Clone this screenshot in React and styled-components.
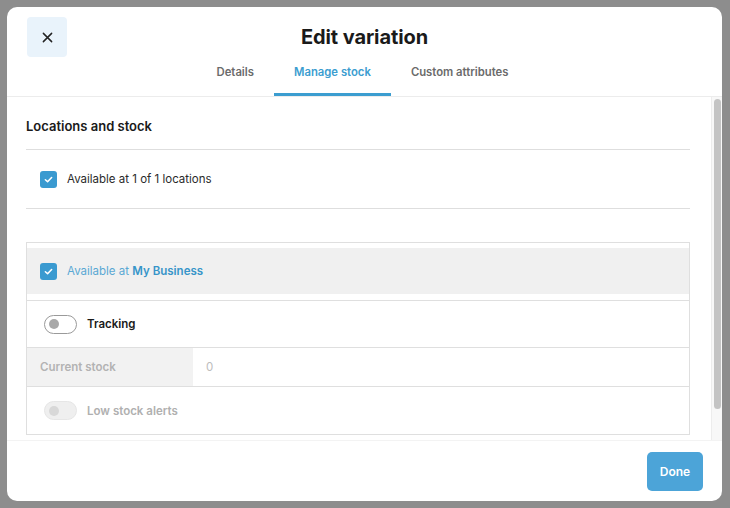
import React from "react";
import styled, { createGlobalStyle, css } from "styled-components";

const GlobalStyle = createGlobalStyle`
  html, body {
    margin: 0;
    padding: 0;
    background: #8d8d8d;
    font-family: Inter, "Open Sans", "Liberation Sans", sans-serif;
  }
  * {
    box-sizing: border-box;
  }
`;

const Backdrop = styled.div`
  width: 730px;
  height: 508px;
  padding: 7px 8px 7px 7px;
`;

const Modal = styled.div`
  width: 715px;
  height: 494px;
  background: #fff;
  border-radius: 10px;
  display: flex;
  flex-direction: column;
  overflow: hidden;
`;

// header

const Header = styled.div`
  padding: 10px 20px 0;
  border-bottom: 1px solid #ececec;
  flex-shrink: 0;
`;

const TopRow = styled.div`
  display: grid;
  grid-template-columns: 40px 1fr 40px;
  align-items: center;
  height: 40px;
`;

const CloseButton = styled.button`
  width: 40px;
  height: 40px;
  border: none;
  border-radius: 4px;
  background: #e9f3fb;
  display: flex;
  align-items: center;
  justify-content: center;
  padding: 0;
  cursor: pointer;
`;

const Title = styled.h1`
  margin: 0;
  text-align: center;
  font-size: 20px;
  font-weight: 700;
  color: #1a1a1a;
  letter-spacing: -0.1px;
`;

const Tabs = styled.div`
  display: flex;
  justify-content: center;
  height: 39px;
  margin-left: -4px;
`;

const Tab = styled.div`
  padding: 0 20px 6px;
  display: flex;
  align-items: center;
  font-size: 11.3px;
  font-weight: 600;
  color: #6b6b6b;
  border-bottom: 3px solid transparent;
  ${(props) =>
    props.active &&
    css`
      color: #3b9dd0;
      border-bottom-color: #3b9dd0;
    `}
`;

// body

const Body = styled.div`
  flex: 1;
  display: flex;
  min-height: 0;
`;

const Content = styled.div`
  flex: 1;
  overflow: hidden;
  padding: 0 21px 0 19px;
`;

const ScrollRail = styled.div`
  width: 11px;
  flex-shrink: 0;
  background: #f8f8f8;
  border-left: 1px solid #ededed;
  padding: 2px 1px 0 2px;
`;

const ScrollThumb = styled.div`
  width: 7px;
  border-radius: 4px;
  background: #c4c4c4;
`;

const SectionTitle = styled.div`
  padding: 21px 0 15px;
  font-size: 13px;
  font-weight: 600;
  color: #1a1a1a;
  border-bottom: 1px solid #dedede;
`;

const LocationsRow = styled.label`
  display: flex;
  align-items: center;
  gap: 10px;
  height: 59px;
  padding-left: 14px;
  border-bottom: 1px solid #dedede;
  font-size: 11.5px;
  color: #2a2a2a;
`;

const Checkbox = styled.span`
  width: 17px;
  height: 17px;
  border-radius: 3px;
  background: #3a9ad0;
  display: flex;
  align-items: center;
  justify-content: center;
  flex-shrink: 0;
`;

const StockBox = styled.div`
  margin-top: 33px;
  border: 1px solid #dfdfdf;
`;

const LocationHead = styled.div`
  padding: 5px 0 6px;
  border-bottom: 1px solid #dfdfdf;
`;

const LocationInner = styled.div`
  background: #f0f0f0;
  height: 46px;
  display: flex;
  align-items: center;
  gap: 10px;
  padding-left: 13px;
  font-size: 11.5px;
  color: #5aa8d4;

  b {
    font-weight: 600;
    color: #3795c9;
  }
`;

const ToggleRow = styled.div`
  height: 47px;
  display: flex;
  align-items: center;
  gap: 10px;
  padding-left: 17px;
  font-size: 11.5px;
  font-weight: 600;
  color: ${(props) => (props.disabled ? "#b0b0b0" : "#1a1a1a")};
  ${(props) =>
    !props.last &&
    css`
      border-bottom: 1px solid #dfdfdf;
    `}
`;

const Toggle = styled.span`
  width: 33px;
  height: 19px;
  border-radius: 10px;
  display: flex;
  align-items: center;
  padding-left: 4px;
  ${(props) =>
    props.disabled
      ? css`
          background: #efefef;
          border: 1px solid #e6e6e6;
        `
      : css`
          background: #fff;
          border: 1.5px solid #9a9a9a;
        `}

  &::before {
    content: "";
    width: 10px;
    height: 10px;
    border-radius: 50%;
    background: ${(props) => (props.disabled ? "#d8d8d8" : "#a8a8a8")};
  }
`;

const StockRow = styled.div`
  display: grid;
  grid-template-columns: 166px 1fr;
  height: 39px;
  border-bottom: 1px solid #dfdfdf;
  font-size: 11.5px;
`;

const StockLabel = styled.div`
  background: #f2f2f2;
  display: flex;
  align-items: center;
  padding-left: 13px;
  font-weight: 600;
  color: #b3b3b3;
`;

const StockValue = styled.div`
  display: flex;
  align-items: center;
  padding-left: 13px;
  color: #bdbdbd;
`;

// footer

const Footer = styled.div`
  flex-shrink: 0;
  height: 61px;
  border-top: 1px solid #f3f3f3;
  display: flex;
  align-items: center;
  justify-content: flex-end;
  padding-right: 19px;
`;

const DoneButton = styled.button`
  width: 56px;
  height: 39px;
  border: none;
  border-radius: 5px;
  background: #4ca4d8;
  color: #fff;
  font-family: inherit;
  font-size: 12px;
  font-weight: 600;
  cursor: pointer;
`;

const CheckIcon = () => (
  <svg width="11" height="11" viewBox="0 0 12 12">
    <path
      d="M2.6 6.3 L5 8.5 L9.4 3.8"
      fill="none"
      stroke="#fff"
      strokeWidth="1.7"
      strokeLinecap="round"
      strokeLinejoin="round"
    />
  </svg>
);

const CloseIcon = () => (
  <svg width="11" height="11" viewBox="0 0 12 12">
    <path
      d="M1.5 1.5 L10.5 10.5 M10.5 1.5 L1.5 10.5"
      stroke="#222"
      strokeWidth="1.6"
      strokeLinecap="round"
    />
  </svg>
);

// visible part of the scroll list vs its full height
const thumbRatio = 0.91;

const App = () => {
  return (
    <Backdrop>
      <GlobalStyle />
      <Modal>
        <Header>
          <TopRow>
            <CloseButton aria-label="Close">
              <CloseIcon />
            </CloseButton>
            <Title>Edit variation</Title>
            <span />
          </TopRow>
          <Tabs>
            <Tab>Details</Tab>
            <Tab active>Manage stock</Tab>
            <Tab>Custom attributes</Tab>
          </Tabs>
        </Header>

        <Body>
          <Content>
            <SectionTitle>Locations and stock</SectionTitle>
            <LocationsRow>
              <Checkbox>
                <CheckIcon />
              </Checkbox>
              Available at 1 of 1 locations
            </LocationsRow>

            <StockBox>
              <LocationHead>
                <LocationInner>
                  <Checkbox>
                    <CheckIcon />
                  </Checkbox>
                  <span>
                    Available at <b>My Business</b>
                  </span>
                </LocationInner>
              </LocationHead>
              <ToggleRow>
                <Toggle />
                Tracking
              </ToggleRow>
              <StockRow>
                <StockLabel>Current stock</StockLabel>
                <StockValue>0</StockValue>
              </StockRow>
              <ToggleRow disabled last>
                <Toggle disabled />
                Low stock alerts
              </ToggleRow>
            </StockBox>
          </Content>
          <ScrollRail>
            <ScrollThumb style={{ height: `${thumbRatio * 100}%` }} />
          </ScrollRail>
        </Body>

        <Footer>
          <DoneButton>Done</DoneButton>
        </Footer>
      </Modal>
    </Backdrop>
  );
};

export default App;
